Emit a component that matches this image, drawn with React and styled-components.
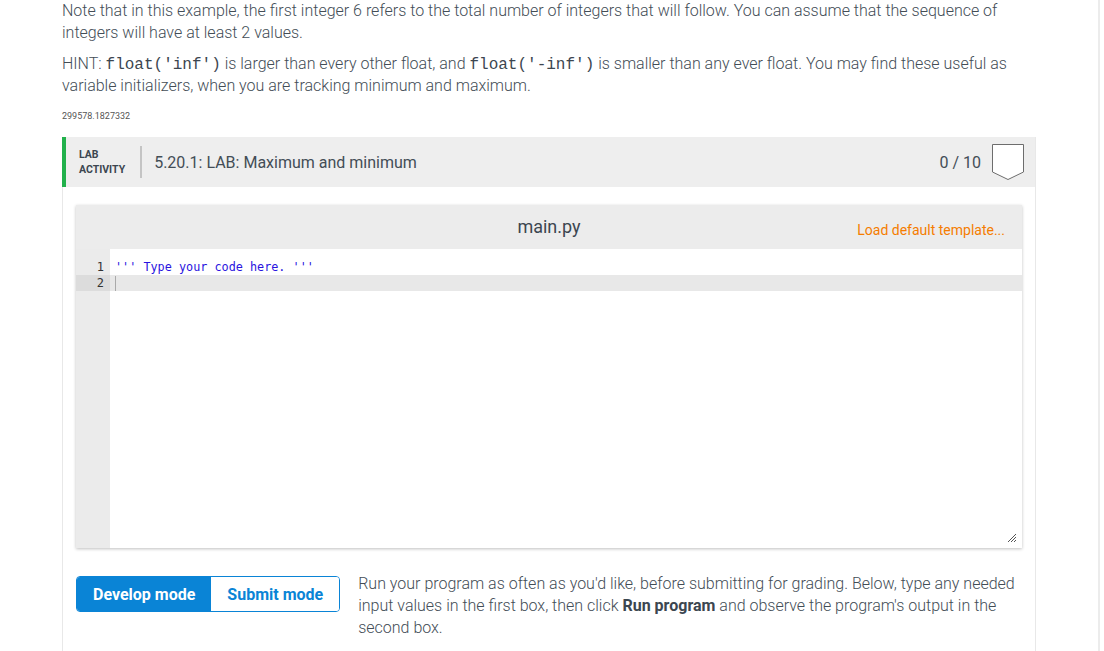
import React from "react";
import styled, { createGlobalStyle } from "styled-components";

const GlobalStyle = createGlobalStyle`
  html, body {
    margin: 0;
    padding: 0;
    background: #fff;
  }
  body {
    font-family: Roboto, "Liberation Sans", sans-serif;
    color: #434d56;
  }
`;

const Page = styled.div`
  width: 1098px;
  min-height: 651px;
  border-right: 2px solid #ececec;
  box-sizing: content-box;
  overflow: hidden;
`;

const Content = styled.div`
  width: 974px;
  margin-left: 62px;
`;

const Para = styled.p`
  margin: 0 0 9px;
  font-size: 16px;
  line-height: 22px;
  font-weight: 300;
  color: #434d56;
`;

const Code = styled.code`
  font-family: "Liberation Mono", "Courier New", monospace;
  font-weight: 400;
  font-size: 16px;
  line-height: 1;
  color: #3c4650;
`;

const ResourceId = styled.div`
  font-size: 9px;
  color: #555;
  margin-top: 13px;
  line-height: 12px;
`;

const Lab = styled.section`
  margin-top: 15px;
  border: 1px solid #e8e8e8;
  border-top: none;
  border-bottom: none;
`;

const LabHeader = styled.header`
  display: flex;
  align-items: center;
  height: 50px;
  background: #eeeeee;
  border-left: 4px solid #22b14c;
  margin-left: -1px;
  padding: 0 10px 0 13px;
`;

const LabTag = styled.div`
  font-size: 10.5px;
  font-weight: 700;
  line-height: 15px;
  color: #3c4650;
  padding: 1px 15px 1px 0;
  margin-right: 12px;
  border-right: 2px solid #c4c4c4;
`;

const LabTitle = styled.h2`
  flex: 1;
  margin: 0;
  font-size: 16px;
  font-weight: 400;
  color: #434d56;
`;

const Score = styled.span`
  font-size: 16px;
  color: #434d56;
  margin-right: 10px;
`;

const LabBody = styled.div`
  padding: 18px 13px 40px 13px;
`;

const Editor = styled.div`
  box-shadow: 0 1px 3px rgba(0, 0, 0, 0.25);
`;

const EditorBar = styled.div`
  position: relative;
  height: 44px;
  background: #ececec;
  display: flex;
  align-items: center;
  justify-content: center;
`;

const FileName = styled.span`
  font-size: 18px;
  color: #3c4650;
  margin-top: -1px;
`;

const TemplateLink = styled.a`
  position: absolute;
  right: 17px;
  top: 17px;
  font-size: 14px;
  color: #f57c00;
  text-decoration: none;
`;

const CodeArea = styled.div`
  position: relative;
  display: flex;
  height: 299px;
  background: #fff;
`;

const Gutter = styled.div`
  width: 34px;
  background: #ebebeb;
  padding-top: 10px;
`;

const GutterCell = styled.div`
  height: 16px;
  line-height: 16px;
  text-align: right;
  padding-right: 6px;
  font-family: "DejaVu Sans Mono", monospace;
  font-size: 12px;
  color: #333;
  background: ${(p) => (p.$active ? "#dcdcdc" : "transparent")};
`;

const Lines = styled.div`
  flex: 1;
  padding-top: 10px;
`;

const Line = styled.div`
  height: 16px;
  line-height: 16px;
  padding-left: 5px;
  font-family: "DejaVu Sans Mono", monospace;
  font-size: 11.8px;
  white-space: pre;
  color: ${(p) => p.$color || "#000"};
  background: ${(p) => (p.$active ? "#e8e8e8" : "transparent")};
`;

const Caret = styled.span`
  display: inline-block;
  width: 1px;
  height: 15px;
  background: #aaa;
  vertical-align: middle;
`;

const Grip = styled.svg`
  position: absolute;
  right: 5px;
  bottom: 5px;
`;

const Controls = styled.div`
  display: flex;
  align-items: flex-start;
  margin-top: 24px;
  gap: 18px;
`;

const ModeGroup = styled.div`
  display: flex;
  margin-top: 4px;
  border: 1px solid #0a84d6;
  border-radius: 4px;
  overflow: hidden;
`;

const ModeButton = styled.button`
  height: 34px;
  padding: 0 ${(p) => p.$pad}px;
  border: none;
  font-family: Roboto, "Liberation Sans", sans-serif;
  font-size: 16px;
  font-weight: 700;
  background: ${(p) => (p.$active ? "#0a84d6" : "#fff")};
  color: ${(p) => (p.$active ? "#fff" : "#0a84d6")};
`;

const Help = styled.p`
  margin: 0;
  padding-top: 1px;
  flex: 1;
  font-size: 16px;
  line-height: 22px;
  font-weight: 300;
  color: #434d56;

  strong {
    font-weight: 700;
    color: #3c4650;
  }
`;

const Badge = () => (
  <svg width="34" height="38" viewBox="0 0 34 38">
    <path
      d="M1.5 1.5 H32.5 V29 L17 36.5 L1.5 29 Z"
      fill="#fff"
      stroke="#6d6d6d"
      strokeWidth="1"
    />
  </svg>
);

export default function App() {
  return (
    <Page>
      <GlobalStyle />
      <Content>
        <Para>
          Note that in this example, the first integer 6 refers to the total
          number of integers that will follow. You can assume that the
          sequence of integers will have at least 2 values.
        </Para>
        <Para>
          HINT: <Code>float('inf')</Code> is larger than every other float, and{" "}
          <Code>float('-inf')</Code> is smaller than any ever float. You may
          find these useful as variable initializers, when you are tracking
          minimum and maximum.
        </Para>
        <ResourceId>299578.1827332</ResourceId>

        <Lab>
          <LabHeader>
            <LabTag>
              LAB
              <br />
              ACTIVITY
            </LabTag>
            <LabTitle>5.20.1: LAB: Maximum and minimum</LabTitle>
            <Score>0 / 10</Score>
            <Badge />
          </LabHeader>

          <LabBody>
            <Editor>
              <EditorBar>
                <FileName>main.py</FileName>
                <TemplateLink href="#">Load default template...</TemplateLink>
              </EditorBar>
              <CodeArea>
                <Gutter>
                  <GutterCell>1</GutterCell>
                  <GutterCell $active>2</GutterCell>
                </Gutter>
                <Lines>
                  <Line $color="#2a14e0">''' Type your code here. '''</Line>
                  <Line $active>
                    <Caret />
                  </Line>
                </Lines>
                <Grip width="10" height="10" viewBox="0 0 10 10">
                  <path d="M9 1 L1 9 M9 4 L4 9 M9 7 L7 9" stroke="#555" strokeWidth="1" />
                </Grip>
              </CodeArea>
            </Editor>

            <Controls>
              <ModeGroup>
                <ModeButton $active $pad={16}>
                  Develop mode
                </ModeButton>
                <ModeButton $pad={16}>Submit mode</ModeButton>
              </ModeGroup>
              <Help>
                Run your program as often as you'd like, before submitting for
                grading. Below, type any needed input values in the first box,
                then click <strong>Run program</strong> and observe the
                program's output in the second box.
              </Help>
            </Controls>
          </LabBody>
        </Lab>
      </Content>
    </Page>
  );
}
